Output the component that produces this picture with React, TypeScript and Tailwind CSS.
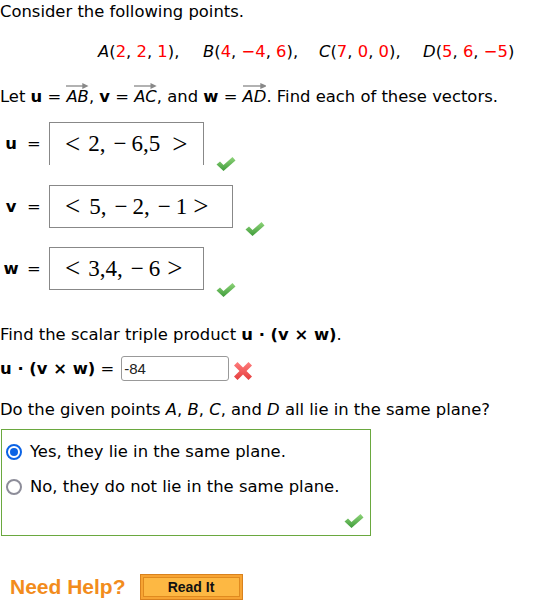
import React from "react";

const Check = ({ className = "" }: { className?: string }) => (
  <svg width="20" height="16" viewBox="0 0 20 16" className={className}>
    <defs>
      <linearGradient id="cg" x1="0" y1="0" x2="0" y2="1">
        <stop offset="0" stopColor="#8fd47a" />
        <stop offset="1" stopColor="#3f9c3a" />
      </linearGradient>
    </defs>
    <path d="M0.5 8.5 L4 5.5 L7.5 9 L16.5 1 L19.5 4.5 L7.5 15 Z" fill="url(#cg)" />
  </svg>
);

const RedX = () => (
  <svg width="20" height="20" viewBox="0 0 20 20">
    <defs>
      <linearGradient id="xg" x1="0" y1="0" x2="0" y2="1">
        <stop offset="0" stopColor="#ff7d7d" />
        <stop offset="1" stopColor="#e43d3d" />
      </linearGradient>
    </defs>
    <path
      d="M1 4.5 L4.5 1 L10 6.5 L15.5 1 L19 4.5 L13.5 10 L19 15.5 L15.5 19 L10 13.5 L4.5 19 L1 15.5 L6.5 10 Z"
      fill="url(#xg)"
    />
  </svg>
);

const Vec = ({ children }: { children: React.ReactNode }) => (
  <span className="relative italic inline-block">
    <svg
      className="absolute left-0 top-[-5px]"
      width="100%"
      height="8"
      viewBox="0 0 22 8"
      preserveAspectRatio="none"
    >
      <line x1="0" y1="4" x2="19" y2="4" stroke="#888" strokeWidth="1.3" />
      <path d="M16 1 L22 4 L16 7 Z" fill="#888" />
    </svg>
    {children}
  </span>
);

const R = ({ children }: { children: React.ReactNode }) => (
  <span className="text-[#ff0000]">{children}</span>
);

const mathFont = { fontFamily: '"Liberation Serif", "DejaVu Serif", serif' };

const Lt = () => <span className="text-[27px] leading-[27px]">&lt;</span>;
const Gt = ({ className = "" }: { className?: string }) => (
  <span className={"text-[27px] leading-[27px] " + className}>&gt;</span>
);

export default function App() {
  return (
    <div
      className="w-[560px] h-[605px] bg-white text-black text-[16.4px] leading-[20px] relative overflow-hidden"
      style={{ fontFamily: '"DejaVu Sans", Verdana, sans-serif' }}
    >
      <div className="pt-[2px]">Consider the following points.</div>

      <div className="mt-[20px] flex pl-[98px] whitespace-nowrap">
        <span className="w-[105px]">
          <i>A</i>(<R>2</R>, <R>2</R>, <R>1</R>),
        </span>
        <span className="w-[116px]">
          <i>B</i>(<R>4</R>, <R>−4</R>, <R>6</R>),
        </span>
        <span className="w-[104px]">
          <i>C</i>(<R>7</R>, <R>0</R>, <R>0</R>),
        </span>
        <span>
          <i>D</i>(<R>5</R>, <R>6</R>, <R>−5</R>)
        </span>
      </div>

      <div className="mt-[25px] whitespace-nowrap">
        Let <b>u</b> = <Vec>AB</Vec>, <b>v</b> = <Vec>AC</Vec>, and <b>w</b> ={" "}
        <Vec>AD</Vec>. Find each of these vectors.
      </div>

      {/* u row */}
      <div className="mt-[15px] flex items-end">
        <div className="flex items-center h-[43px] self-stretch">
          <span className="w-[22px] text-center font-bold">u</span>
          <span className="ml-[5px] w-[22px]">=</span>
        </div>
        <div
          className="w-[155px] h-[43px] border-t border-l border-r border-[#888] flex items-center pl-[15px] text-[23px]"
          style={mathFont}
        >
          <Lt />
          <span className="ml-[8px]">2,</span>
          <span className="ml-[8px]">−</span>
          <span className="ml-[5px]">6,5</span>
          <Gt className="ml-[12px]" />
        </div>
        <Check className="ml-[12px] mb-[-7px]" />
      </div>

      {/* v row */}
      <div className="mt-[20px] flex items-end">
        <div className="flex items-center h-[43px] self-stretch">
          <span className="w-[22px] text-center font-bold">v</span>
          <span className="ml-[5px] w-[22px]">=</span>
        </div>
        <div
          className="w-[184px] h-[43px] border border-[#888] flex items-center pl-[15px] text-[23px]"
          style={mathFont}
        >
          <Lt />
          <span className="ml-[9px]">5,</span>
          <span className="ml-[8px]">−</span>
          <span className="ml-[5px]">2,</span>
          <span className="ml-[8px]">−</span>
          <span className="ml-[5px]">1</span>
          <Gt className="ml-[6px]" />
        </div>
        <Check className="ml-[12px] mb-[-9px]" />
      </div>

      {/* w row */}
      <div className="mt-[19px] flex items-end">
        <div className="flex items-center h-[43px] self-stretch">
          <span className="w-[22px] text-center font-bold">w</span>
          <span className="ml-[5px] w-[22px]">=</span>
        </div>
        <div
          className="w-[155px] h-[43px] border border-[#888] flex items-center pl-[15px] text-[23px]"
          style={mathFont}
        >
          <Lt />
          <span className="ml-[8px]">3,4,</span>
          <span className="ml-[8px]">−</span>
          <span className="ml-[5px]">6</span>
          <Gt className="ml-[7px]" />
        </div>
        <Check className="ml-[12px] mb-[-8px]" />
      </div>

      <div className="mt-[35px] whitespace-nowrap">
        Find the scalar triple product <b>u · (v × w)</b>.
      </div>

      <div className="mt-[11px] flex items-center h-[25px]">
        <span className="whitespace-nowrap">
          <b>u · (v × w)</b> =
        </span>
        <div
          className="ml-[7px] w-[108px] h-[25px] border border-[#999] rounded-[3px] flex items-center pl-[2px] text-[15px] text-[#222]"
          style={{ fontFamily: '"Liberation Sans", Arial, sans-serif' }}
        >
          -84
        </div>
        <span className="ml-[4px] mt-[4px]">
          <RedX />
        </span>
      </div>

      <div className="mt-[19px] whitespace-nowrap">
        Do the given points <i>A</i>, <i>B</i>, <i>C</i>, and <i>D</i> all lie in the same plane?
      </div>

      <div className="mt-[9px] ml-[1px] w-[370px] h-[107px] border border-[#6aa83f] flex flex-col relative">
        <div className="mt-[12px] flex items-center">
          <span className="ml-[4px] w-[16px] h-[16px] rounded-full border-[2px] border-[#0b63e5] flex items-center justify-center">
            <span className="w-[8px] h-[8px] rounded-full bg-[#0b63e5]" />
          </span>
          <span className="ml-[8px]">Yes, they lie in the same plane.</span>
        </div>
        <div className="mt-[15px] flex items-center">
          <span className="ml-[4px] w-[16px] h-[16px] rounded-full border-[2px] border-[#8d8d99]" />
          <span className="ml-[8px]">No, they do not lie in the same plane.</span>
        </div>
        <div className="flex-1 flex items-end justify-end pr-[6px] pb-[6px]">
          <Check />
        </div>
      </div>

      <div className="mt-[38px] flex items-center">
        <span
          className="ml-[10px] text-[21px] leading-[26px] font-bold text-[#f28c1c]"
          style={{ fontFamily: '"Liberation Sans", Arial, sans-serif' }}
        >
          Need Help?
        </span>
        <div className="ml-[14px] w-[103px] h-[26px] border border-[#d9821e] bg-[#f7a433] p-[2px]">
          <div
            className="w-full h-full border border-[#e08a1f] bg-[#fdb843] flex items-center justify-center text-[14px] font-bold text-[#111]"
            style={{ fontFamily: '"Liberation Sans", Arial, sans-serif' }}
          >
            Read It
          </div>
        </div>
      </div>
    </div>
  );
}
